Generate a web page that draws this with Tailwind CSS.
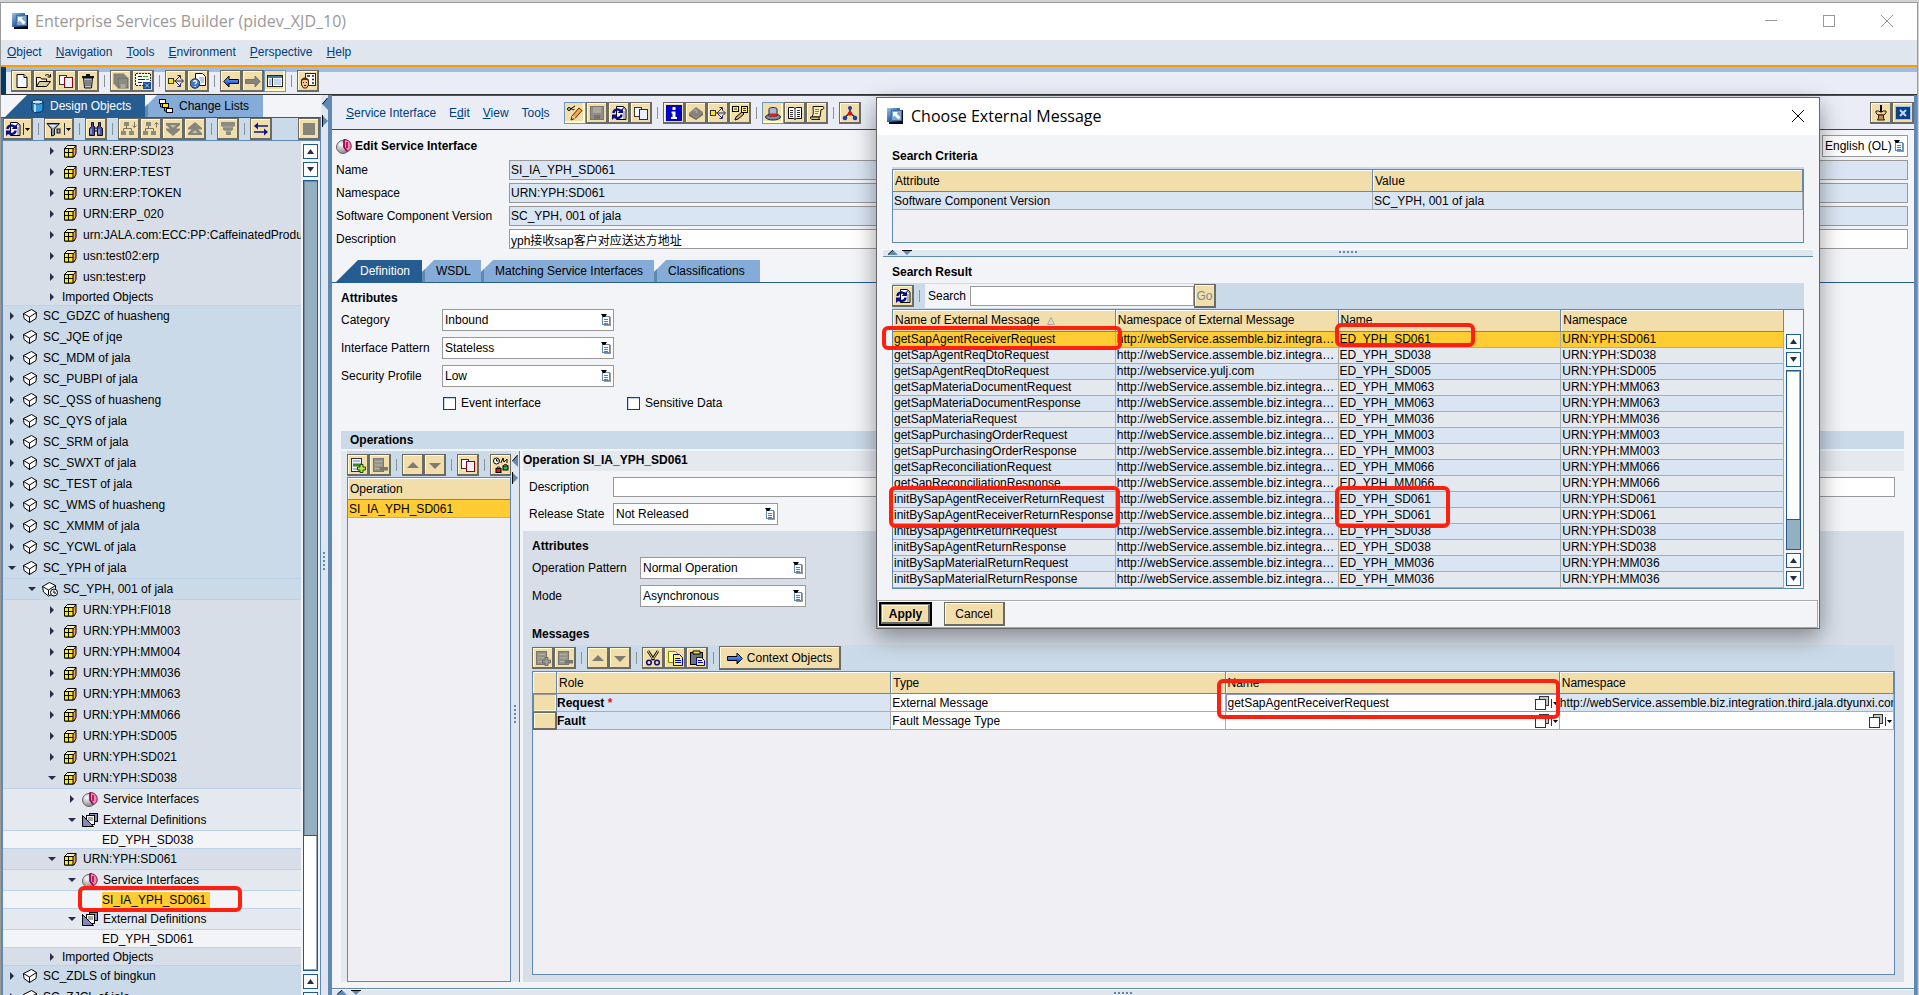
<!DOCTYPE html>
<html lang="en">
<head>
    <meta charset="UTF-8">
    <meta name="viewport" content="width=device-width, initial-scale=1.0">
    <title>Enterprise Services Builder (pidev_XJD_10)</title>
    <script src="https://cdn.jsdelivr.net/npm/@tailwindcss/browser@4"></script>
</head>
<body class="h-screen flex flex-col overflow-hidden relative bg-[#d2d2d2] pt-[2px] pr-px text-xs text-black font-['Liberation_Sans','Noto_Sans_CJK_SC',sans-serif]">

    <!-- Icons -->
    <svg class="absolute w-0 h-0" xmlns="http://www.w3.org/2000/svg">
        <defs>
            <linearGradient id="gBlue" x1="0" y1="0" x2="1" y2="1"><stop offset="0" stop-color="#9cc4ee"/><stop offset=".5" stop-color="#3a6ea8"/><stop offset="1" stop-color="#06182e"/></linearGradient>
            <linearGradient id="gArrow" x1="0" y1="0" x2="0" y2="1"><stop offset="0" stop-color="#6fd0ff"/><stop offset="1" stop-color="#0020e0"/></linearGradient>
            <radialGradient id="gBall" cx=".35" cy=".3" r=".8"><stop offset="0" stop-color="#fff"/><stop offset="1" stop-color="#777"/></radialGradient>
        </defs>
        <symbol id="i-app" viewBox="0 0 16 16"><rect x="2" y="2" width="14" height="14" fill="#000814"/><rect x="0" y="0" width="13" height="14" fill="url(#gBlue)"/><rect x="4" y="2" width="11" height="11" fill="#3d6fa6"/><rect x="5" y="3" width="9" height="9" fill="#7ba7d6"/><path d="M6 4h5L9.500 5.500l4 4-2 2-4-4L6 9z" fill="#fff"/></symbol>
        <symbol id="i-new" viewBox="0 0 16 16"><path d="M3 1.500h7l3 3v10H3z" fill="#f4f8ff" stroke="#000"/><path d="M10 1.500v3h3" fill="#fff" stroke="#000"/></symbol>
        <symbol id="i-open" viewBox="0 0 16 16"><path d="M.5 13.500v-9h4l1 1.500h5v2.500" fill="#f5f0c0" stroke="#000"/><path d="M.5 13.500l3-5h11l-4 5z" fill="#d9cf9a" stroke="#000"/><path d="M9 2.500c2-1.500 4-1 5 1M14.500 1v3h-3" fill="none" stroke="#000"/></symbol>
        <symbol id="i-copy" viewBox="0 0 16 16"><rect x="1.500" y="2.500" width="7" height="9" fill="#f6f8ff" stroke="#333"/><rect x="6.500" y="4.500" width="8" height="10" fill="#e8f2ff" stroke="#900010"/></symbol>
        <symbol id="i-trash" viewBox="0 0 16 16"><path d="M3.500 5h9l-1 10h-7z" fill="#b9bec8" stroke="#111"/><path d="M2 4h12M6 2h4" stroke="#111" stroke-width="2"/><path d="M6 7v6M8 7v6M10 7v6" stroke="#444"/></symbol>
        <symbol id="i-saveall" viewBox="0 0 16 16"><rect x="1" y="1" width="10" height="10" fill="#8b8b86" stroke="#77776f"/><rect x="3" y="3" width="10" height="10" fill="#9a9a94" stroke="#77776f"/><rect x="5" y="5" width="10" height="10" fill="#8b8b86" stroke="#66665f"/><path d="M7.500 11h5v4h-5z" fill="#aaa9a0"/></symbol>
        <symbol id="i-form" viewBox="0 0 16 16"><rect x="1" y="1" width="14" height="11" fill="#f6fbf6"/><path d="M1 .5h14M.5 1v11M1 12.500h8M15.500 1v7" fill="none" stroke="#222" stroke-dasharray="2 1"/><path d="M3 3.500h4M3 6.500h7M3 9.500h4" stroke="#222"/><path d="M8 3.500h5M11 6.500h3" stroke="#3aa03a"/><rect x="8" y="9" width="8" height="7" fill="#1d4c94"/><path d="M10 10.500l4 4m0-4l-4 4" stroke="#a8ccf4"/></symbol>
        <symbol id="i-where" viewBox="0 0 16 16"><rect x=".5" y="5.500" width="5" height="5" fill="#ffe600" stroke="#333"/><path d="M6 8h9M7 8l5-5M7 8l5 5" fill="none" stroke="#1c2a7a"/><path d="M9.500 2.500h3v3M9.500 13.500h3v-3M13 5.500l2.500 2.500-2.500 2.500" fill="none" stroke="#1c2a7a"/></symbol>
        <symbol id="i-help" viewBox="0 0 16 16"><path d="M5.500.5h7l3 3v9h-10z" fill="#fff" stroke="#00008b"/><path d="M9 5h5M10 7h4M11 9h3" stroke="#7b8fc0"/><circle cx="5" cy="10.500" r="4.800" fill="#3c78c4" stroke="#12356b"/><path d="M3.500 9c0-2 3.200-2 3.200 0 0 1.200-1.600 1.200-1.600 2.400M5.100 13v1" fill="none" stroke="#fff" stroke-width="1.300"/></symbol>
        <symbol id="i-back" viewBox="0 0 16 16"><path d="M.8 8.500L6 3v3.500h9.500v4H6V14z" fill="url(#gArrow)" stroke="#000"/></symbol>
        <symbol id="i-fwd" viewBox="0 0 16 16"><path d="M15.200 8.500L10 3v3.500H.5v4H10V14z" fill="#85857c" stroke="#77776f"/></symbol>
        <symbol id="i-ctx" viewBox="0 0 16 16"><path d="M15.200 8.500L10 3v3.500H.5v4H10V14z" fill="url(#gArrow)" stroke="#000"/></symbol>
        <symbol id="i-window" viewBox="0 0 16 16"><rect x=".5" y="2.500" width="15" height="11" fill="#fff" stroke="#222"/><path d="M1 4h14" stroke="#3a78c0" stroke-width="2"/><path d="M5.500 5v8" stroke="#222"/><path d="M2 7h2.500M2 9h2.500M2 11h2.500" stroke="#3a78c0"/><path d="M7 7h7M7 9h7M7 11h7" stroke="#7fa9da"/></symbol>
        <symbol id="i-user" viewBox="0 0 16 16"><rect x="5.500" y=".5" width="10" height="12" fill="#fff" stroke="#222"/><path d="M7 3h3M12 3h2M12 6.500h2M12 10h2" stroke="#222" stroke-width="1.600"/><path d="M1.500 8c0-4 7-4 7 0v4l-2 3h-3l-2-3z" fill="#f3c08a" stroke="#3a1c00"/><path d="M1 8.500c0-5 8-5 8 0L7 7H3z" fill="#5a3010"/><path d="M3 9.500h1M6 9.500h1M4 12.500h2" stroke="#3a1c00"/></symbol>
        <symbol id="i-refresh" viewBox="0 0 16 16"><path d="M5.500 1.500h7l2.500 2.500v10.500H5.500z" fill="#fff" stroke="#000"/><path d="M12.500 1.500V4H15M13 6v8" fill="none" stroke="#666"/><path d="M2.500 8c0-4 6-4.500 7.500-1.500M10.500 9.500c0 4-6 4.500-7.500 1.500" fill="none" stroke="#0a0a8c" stroke-width="2.400"/><path d="M6.500 8H12V3zM6.500 9.500H1V15z" fill="#0a0a8c"/></symbol>
        <symbol id="i-filter" viewBox="0 0 16 16"><path d="M1 2.500h12.500L8.500 8v6l-3 1V8z" fill="#7d93ad" stroke="#111"/><path d="M3 4h8L7 7z" fill="#dfe9f4"/><rect x="11" y="8" width="3" height="4" fill="#8aa4c4" stroke="#112"/></symbol>
        <symbol id="i-find" viewBox="0 0 16 16"><path d="M3.500 1.500h2v4h1v9h-5v-7l2-2zM12.500 1.500h-2v4h-1v9h5v-7l-2-2z" fill="#4a4f9c" stroke="#0a0a30"/><path d="M6.500 7h3v3h-3z" fill="#9fa4d8" stroke="#0a0a30"/><path d="M3 8v5M11 8v5" stroke="#c8cbf0"/></symbol>
        <symbol id="i-expand" viewBox="0 0 16 16"><path d="M3 1h5v4H3zM0 10h5v4H0zM8 10h5v4H8z" fill="#8b8b82"/><path d="M5.500 5v3M2.500 10V7.500h8V10M13.500 1v5M11.500 4.500l2 2 2-2" fill="none" stroke="#77776f"/></symbol>
        <symbol id="i-collapse" viewBox="0 0 16 16"><path d="M3 1h5v4H3zM0 10h5v4H0zM8 10h5v4H8z" fill="#8b8b82"/><path d="M5.500 5v3M2.500 10V7.500h8V10M13.500 1.500v5M11.500 3.500l2-2 2 2" fill="none" stroke="#77776f"/></symbol>
        <symbol id="i-ddown" viewBox="0 0 16 16"><path d="M1 2h14v2L11 7.500h4V9l-7 6-7-6V7.500h4L1 4z" fill="#85857c"/><path d="M5 4h6L8 7z" fill="#c4bfa0"/></symbol>
        <symbol id="i-dup" viewBox="0 0 16 16"><path d="M1 14h14v-2l-4-3.500h4V7L8 1 1 7v1.500h4L1 12z" fill="#85857c"/><path d="M5 12h6L8 9z" fill="#c4bfa0"/></symbol>
        <symbol id="i-stack" viewBox="0 0 16 16"><path d="M1 1h14v4l-2 1v3l-2 1v4H6v-4L3 9V6L1 5z" fill="#8b8b82"/><path d="M3 6h10M6 10h5" stroke="#b5b3a0"/></symbol>
        <symbol id="i-swap" viewBox="0 0 16 16"><path d="M15 5H3M13 11H1" stroke="#0a1a8c" stroke-width="1.600"/><path d="M5 1.500v7L1 5zM11 7.500v7l4-3.500z" fill="#0a1a8c"/></symbol>
        <symbol id="i-square" viewBox="0 0 16 16"><rect x="2" y="2" width="12" height="12" fill="#85857c"/></symbol>
        <symbol id="i-tri-up" viewBox="0 0 16 16"><path d="M2 11h12L8 5z" fill="#7c7c74"/></symbol>
        <symbol id="i-tri-down" viewBox="0 0 16 16"><path d="M2 6h12l-6 6z" fill="#7c7c74"/></symbol>
        <symbol id="i-wand" viewBox="0 0 16 16"><path d="M4 15l1-4 7-8 3 2.500-7 8z" fill="#f0a848" stroke="#5a2a00"/><path d="M5 11l3 2.500" stroke="#fff"/><circle cx="2" cy="4" r="1.500" fill="none" stroke="#000"/><path d="M3.500 4L8 1M3.500 4.500c2-1.500 2 1 4 0" fill="none" stroke="#000"/></symbol>
        <symbol id="i-save" viewBox="0 0 16 16"><rect x="1.500" y="1.500" width="13" height="13" fill="#8f8f88" stroke="#77776f"/><path d="M4 2h8v6H4z" fill="#a9a9a2"/><path d="M5 10h6v4H5z" fill="#77776f"/></symbol>
        <symbol id="i-info" viewBox="0 0 16 16"><rect width="16" height="16" fill="#0000c4"/><path d="M6.500 2h3v3h-3zM5.500 6.500h4V12H11v2H5v-2h1.500V8.500h-1z" fill="#fff"/></symbol>
        <symbol id="i-book" viewBox="0 0 16 16"><path d="M1 8l7-6 7 5-7 6z" fill="#85857c"/><path d="M1 8v3l7 4 7-5V7l-7 6z" fill="#6f6f68"/><path d="M6 6c2-2 4 0 2 2" fill="none" stroke="#c2c0b0"/></symbol>
        <symbol id="i-edit" viewBox="0 0 16 16"><rect x=".5" y="1.500" width="6" height="5" fill="#fff34a" stroke="#000"/><rect x="9.500" y="1.500" width="6" height="6" fill="#fff34a" stroke="#000"/><path d="M11 3.500h3M11 5.500h3M2 4h3" stroke="#333"/><path d="M3 15l1-3 6-5 2 2-6 5z" fill="#d9b27c" stroke="#000"/></symbol>
        <symbol id="i-hat" viewBox="0 0 16 16"><ellipse cx="8" cy="12" rx="7.500" ry="3" fill="#7b8ea8" stroke="#223"/><path d="M4 11V4c0-2 8-2 8 0v7z" fill="#a9b9cf" stroke="#223"/><path d="M4 8.500h8V11c-2 1-6 1-8 0z" fill="#d02020"/></symbol>
        <symbol id="i-pages" viewBox="0 0 16 16"><path d="M1.500 2.500h5l1.500 1 1.500-1h5v11h-5L8 14.500l-1.500-1h-5z" fill="#fff" stroke="#000"/><path d="M8 4v10M3 5.500h3M3 7.500h3M3 9.500h3M3 11.500h3M10 5.500h3M10 7.500h3M10 9.500h3M10 11.500h3" stroke="#333"/></symbol>
        <symbol id="i-scroll" viewBox="0 0 16 16"><path d="M4 1.500h10c1 0 1 3-.5 3H12l-1 7.500H3c2-3 1-7 1-10.500z" fill="#f5efb8" stroke="#111"/><path d="M1.500 12h8.500c0 2 0 2.500 1 2.500H3c-1 0-1.500-1-1.500-2.500z" fill="#cfc78c" stroke="#111"/><path d="M6 4.500h4M6 6.500h4M6 8.500h3" stroke="#777"/></symbol>
        <symbol id="i-nodes" viewBox="0 0 16 16"><path d="M8 3v5M8 8l-5 4M8 8l5 4" stroke="#223" stroke-width="1.500"/><circle cx="8" cy="3" r="2" fill="#1c3fa0"/><circle cx="8" cy="8.500" r="2.300" fill="#d81818"/><circle cx="3" cy="13" r="2.300" fill="#1c3fa0"/><circle cx="13" cy="13" r="2.300" fill="#1c3fa0"/></symbol>
        <symbol id="i-pin" viewBox="0 0 16 16"><path d="M8 0v7" stroke="#000" stroke-width="2"/><path d="M3 6h3l1 1h2l1-1h3v2l-2 2h-6L3 8z" fill="#f0cf90" stroke="#2a1a08"/><path d="M5.500 10h5v3l1 2h-7l1-2z" fill="#c08a50" stroke="#2a1a08"/></symbol>
        <symbol id="i-close" viewBox="0 0 16 16"><rect x=".5" y="1.500" width="15" height="13" fill="#0d3f86" stroke="#9fc0f2"/><path d="M5 5l6 6m0-6l-6 6" stroke="#bcd8fa" stroke-width="2"/></symbol>
        <symbol id="i-addrow" viewBox="0 0 16 16"><rect x="1.500" y="1.500" width="10" height="13" fill="#eef0fc" stroke="#333"/><path d="M3 4h7M3 12h4" stroke="#7a7fc0"/><path d="M3 8h8" stroke="#2f8f2f" stroke-width="3"/><path d="M10 7.500h3V10h2.500v3H13v2.500h-3V13H7.500v-3H10z" fill="#b6e04a" stroke="#1d4a00"/></symbol>
        <symbol id="i-addrow-off" viewBox="0 0 16 16"><rect x="1.500" y="1.500" width="10" height="13" fill="#93938c" stroke="#77776f"/><path d="M3 4.500h7M3 8h7M3 11.500h4" stroke="#b5b3a6"/><path d="M10 7.500h3V10h2.500v3H13v2.500h-3V13H7.500v-3H10z" fill="#9c9c94" stroke="#6c6c65"/></symbol>
        <symbol id="i-delrow" viewBox="0 0 16 16"><rect x="1.500" y="1.500" width="10" height="13" fill="#93938c" stroke="#77776f"/><path d="M3 4.500h7M3 8h7M3 11.500h4" stroke="#b5b3a6"/><path d="M8 10h8v3.500H8z" fill="#77776f"/></symbol>
        <symbol id="i-compare" viewBox="0 0 16 16"><circle cx="3.500" cy="4" r="3" fill="#fff" stroke="#000"/><path d="M3.500 2v2h2M8 6l2-5 1 4 3-3v4" fill="none" stroke="#000"/><path d="M3.500 11.500c0-2 4-2 4 0M10.500 9c0-2 4-2 4 0" fill="none" stroke="#000"/><rect x="3" y="11.500" width="5" height="4" fill="#e02020" stroke="#000"/><rect x="10" y="9" width="5" height="4" fill="#20c040" stroke="#000"/></symbol>
        <symbol id="i-cut" viewBox="0 0 16 16"><path d="M3 1l6 9M13 1L7 10" stroke="#000" stroke-width="2.500"/><path d="M3 1l5 8M13 1L8 9" stroke="#f3ee6a"/><circle cx="4" cy="12.500" r="2.300" fill="none" stroke="#10107a" stroke-width="1.600"/><circle cx="12" cy="12.500" r="2.300" fill="none" stroke="#10107a" stroke-width="1.600"/></symbol>
        <symbol id="i-copy2" viewBox="0 0 16 16"><path d="M1.500 1.500h7l2 2v9h-9z" fill="#fff9a0" stroke="#888800"/><path d="M6.500 4.500h6l3 3v8h-9z" fill="#fff94a" stroke="#0000b8"/><path d="M8 8.500h5M8 10.500h6M8 12.500h6" stroke="#0000b8"/></symbol>
        <symbol id="i-paste" viewBox="0 0 16 16"><rect x="1.500" y="2.500" width="12" height="12" fill="#6c7480" stroke="#000"/><path d="M4 1h7v3H4z" fill="#f4e640" stroke="#000"/><path d="M7.500 7.500h5l3 3v5h-8z" fill="#fff94a" stroke="#0000b8"/><path d="M9 10.500h4M9 12.500h5" stroke="#0000b8"/></symbol>
        <symbol id="i-cyl" viewBox="0 0 16 16"><path d="M2 4v8c0 3 11 3 11 0V4z" fill="#2f9be0" stroke="#0a2a50"/><path d="M5 6v8" stroke="#aee0ff" stroke-width="2"/><ellipse cx="7.500" cy="4" rx="5.500" ry="2" fill="#c9ecff" stroke="#0a2a50"/></symbol>
        <symbol id="i-lists" viewBox="0 0 16 16"><rect x="1.500" y="1.500" width="6" height="4" fill="#fff" stroke="#000"/><rect x="4.500" y="5.500" width="6" height="4" fill="#ffe600" stroke="#000"/><rect x="8.500" y="10.500" width="6" height="4" fill="#fff" stroke="#000"/><path d="M2.500 6v3h2M6.500 10v3h2" fill="none" stroke="#000"/></symbol>
        <symbol id="i-box" viewBox="0 0 16 16"><path d="M1.500 5.500l8-4 5 3-.5 6-6.500 4-5.500-4z" fill="#fff" stroke="#000"/><path d="M1.500 5.500l6 3.500 7-4.500M7.500 9v5.500" fill="none" stroke="#000"/></symbol>
        <symbol id="i-boxver" viewBox="0 0 16 16"><path d="M.5 5.500l7-4 6 3v3l-1 5-6 2.500-5-4z" fill="#fff" stroke="#000"/><path d="M.5 5.500l6 3.500 7-4.500M6.500 9v5" fill="none" stroke="#000"/><circle cx="12" cy="11.500" r="3.500" fill="#eee" stroke="#000"/><path d="M12 9.500v2.500h2" fill="none" stroke="#000"/></symbol>
        <symbol id="i-ns" viewBox="0 0 16 16"><path d="M2.500 5.500l3-3h8.500v8l-2 3.500h-9.500z" fill="#f0a060" stroke="#000"/><path d="M2.500 5.500l3-3H14l-2.500 3z" fill="#fff6b0" stroke="#000"/><path d="M2.500 5.500h8.500v8.500H2.500z" fill="#ffee00" stroke="#000"/><path d="M6.500 5.500V14M2.500 9.500h8.500" stroke="#000"/></symbol>
        <symbol id="i-svc" viewBox="0 0 16 16"><circle cx="7" cy="9" r="6.500" fill="url(#gBall)" stroke="#666"/><path d="M8 1.500c9 0 9 11 3 12L8 9z" fill="#f58a9c" stroke="#7a0a50"/><path d="M8 1.500V9l3 4M11 4v6" fill="none" stroke="#9a0060" stroke-width="1.500"/></symbol>
        <symbol id="i-ext" viewBox="0 0 16 16"><rect x="7.500" y="1.500" width="8" height="8" fill="#8a8ab8" stroke="#000"/><rect x="4.500" y="3.500" width="8" height="9" fill="#fff" stroke="#000"/><path d="M6 6h5M6 8h5" stroke="#555"/><path d="M.5 3.500l11 11H.5z" fill="#8488b8" stroke="#000"/></symbol>
        <symbol id="i-list" viewBox="0 0 10 12"><path d="M3 3h7v9H3z" fill="#9a9a9a"/><rect x="1.500" y="2.500" width="7" height="8" fill="#fff" stroke="#5f89b3"/><path d="M3 5.500h4M3 7.500h4M3 9.500h4" stroke="#4a7fb0"/><path d="M0 0h6L4 3H2z" fill="#000"/></symbol>
        <symbol id="i-pick" viewBox="0 0 24 14"><rect x="4.500" y=".5" width="9" height="9" fill="#b9c9cf" stroke="#333"/><rect x=".5" y="3.500" width="10" height="10" fill="#fff" stroke="#333"/><path d="M16.500 3v9" stroke="#333"/><path d="M18 6h5l-2.500 3z" fill="#000"/></symbol>
    </svg>

    <div class="flex-1 min-h-0 flex flex-col border-t border-x border-[#999999] bg-[#f2f4f8]">

        <!-- Title bar -->
        <header class="h-[37px] shrink-0 flex items-center bg-white pl-[11px] pb-px">
            <svg class="size-4"><use href="#i-app"/></svg>
            <h1 class="ml-[7px] pb-px flex-1 text-base font-['Open_Sans',sans-serif] text-[#999999] whitespace-nowrap">Enterprise Services Builder (pidev_XJD_10)</h1>
            <div class="flex items-center gap-[46px] mr-6">
                <button aria-label="Minimize"><svg class="w-3 h-3" viewBox="0 0 12 12"><path d="M0 5.500h12" stroke="#999"/></svg></button>
                <button aria-label="Maximize"><svg class="w-3 h-3" viewBox="0 0 12 12"><rect x=".5" y=".5" width="11" height="11" fill="none" stroke="#999"/></svg></button>
                <button aria-label="Close"><svg class="w-3 h-3" viewBox="0 0 12 12"><path d="M0 0l12 12M12 0L0 12" stroke="#999"/></svg></button>
            </div>
        </header>

        <nav class="h-[27px] shrink-0 flex items-center gap-[14px] pl-[6px] pb-[2px] bg-[#dfe6ee] border-b-2 border-[#ff9900] text-[#003c82]">
            <button><u>O</u>bject</button>
            <button><u>N</u>avigation</button>
            <button><u>T</u>ools</button>
            <button><u>E</u>nvironment</button>
            <button><u>P</u>erspective</button>
            <button><u>H</u>elp</button>
        </nav>

        <div class="h-7 shrink-0 flex border-b border-[#333333] bg-[linear-gradient(#9fbde0_5px,#eaedf6_5px)]">
            <div class="w-[5px] bg-[#003a66]"></div>
            <div class="flex pt-[3px] pl-[5px]" data-toolbar="main"></div>
        </div>

        <div class="flex-1 min-h-0 flex">

            <!-- Navigation area -->
            <aside class="w-[320px] shrink-0 flex flex-col">
                <div class="h-[23px] shrink-0 flex border-b border-[#255d93] pl-1">
                    <button class="w-[140px] pl-[25px] flex items-center gap-1 text-white bg-[#255d93] [clip-path:polygon(22px_0,100%_0,100%_100%,0_100%)]"><svg class="size-4"><use href="#i-cyl"/></svg>Design Objects</button>
                    <button class="w-[118px] pl-[10px] flex items-center gap-[5px] bg-[#85acd9] border-l-3 border-[#5f89b0] [clip-path:polygon(12px_0,100%_0,100%_100%,0_100%,0_12px)]"><svg class="size-4"><use href="#i-lists"/></svg>Change Lists</button>
                </div>
                <div class="flex-1 min-h-0 flex flex-col border-l-2 border-r border-[#5f89b3]">
                    <div class="h-[23px] shrink-0 flex bg-[#cbdae9] border-b border-[#5f89b3]" data-toolbar="tree"></div>
                    <div class="flex-1 min-h-0 flex">
                        <div class="flex-1 min-w-0 overflow-hidden" id="tree"></div>
                        <div class="w-[19px] shrink-0 flex flex-col items-center gap-[3px] pt-[3px] bg-[#f2f4f8]">
                            <button aria-label="Scroll up" class="w-[15px] h-[15px] shrink-0 flex items-center justify-center border border-[#1f5b92] bg-white"><svg class="w-[9px] h-[5px]" viewBox="0 0 9 5"><path d="M1 5h7L4.500 0z" fill="#2a2a4a"/></svg></button>
                            <button aria-label="Scroll down" class="w-[15px] h-[15px] shrink-0 flex items-center justify-center border border-[#1f5b92] bg-white"><svg class="w-[9px] h-[5px]" viewBox="0 0 9 5"><path d="M1 0h7L4.500 5z" fill="#2a2a4a"/></svg></button>
                            <div class="w-[15px] flex-1 border border-[#1f5b92] bg-white flex flex-col shadow-[inset_-1px_-1px_0_#9aa4ae]">
                                <div class="h-[83%] bg-[#94afc1] border-b border-[#1f5b92] shadow-[inset_1px_1px_0_#76899a]"></div>
                            </div>
                            <button aria-label="Page up" class="w-[15px] h-[15px] shrink-0 flex items-center justify-center border border-[#1f5b92] bg-white"><svg class="w-[9px] h-[5px]" viewBox="0 0 9 5"><path d="M1 5h7L4.500 0z" fill="#2a2a4a"/></svg></button>
                            <div class="w-[15px] h-[3px] shrink-0 border border-b-0 border-[#1f5b92] bg-white"></div>
                        </div>
                    </div>
                </div>
            </aside>

            <!-- Splitter -->
            <div class="w-[7px] shrink-0 bg-[#dfe6ee] flex flex-col items-center pt-[3px]">
                <svg class="w-[6px] h-[30px] shrink-0" viewBox="0 0 6 30"><path d="M6 0v12L0 6z" fill="#5f89b3"/><path d="M5.500 0L.5 6" stroke="#000"/><path d="M0 17v12l6-6z" fill="#5f89b3"/><path d="M.5 17v12" stroke="#000"/></svg>
                <svg class="w-[3px] h-[20px] mt-[424px]" viewBox="0 0 3 20"><path d="M1 0v20" stroke="#5f89b3" stroke-width="2" stroke-dasharray="2 2"/></svg>
            </div>

            <!-- Work area -->
            <main class="flex-1 min-w-0 flex flex-col border-l-4 border-r-3 border-[#5f89b3]">
                <div class="h-[35px] shrink-0 flex items-start border-t border-t-[#255d93] border-b border-b-[#444444] bg-[#eaedf6] pt-[6px] pl-[14px]">
                    <nav class="flex items-center h-[22px] gap-[13px] w-[218px] text-[#003c82] whitespace-nowrap">
                        <button><u>S</u>ervice Interface</button>
                        <button>E<u>d</u>it</button>
                        <button><u>V</u>iew</button>
                        <button>Too<u>l</u>s</button>
                    </nav>
                    <div class="flex flex-1" data-toolbar="editor"></div>
                    <div class="flex" data-toolbar="pane"></div>
                </div>

                <div class="pl-1 pr-[6px] pt-[5px]">
                    <div class="flex items-center h-[22px]">
                        <svg class="size-4"><use href="#i-svc"/></svg>
                        <h2 class="ml-[3px] flex-1 font-bold">Edit Service Interface</h2>
                        <div class="w-[86px] h-[22px] flex items-center border border-[#999999] bg-white pr-[3px]">
                            <select aria-label="Language" class="flex-1 min-w-0 appearance-none pl-[2px] whitespace-nowrap outline-none"><option>English (OL)</option></select>
                            <svg class="w-[10px] h-3 shrink-0"><use href="#i-list"/></svg>
                        </div>
                    </div>
                    <div class="mt-[3px] grid grid-cols-[173px_1fr] gap-y-[3px] items-center">
                        <label for="name">Name</label>
                        <input id="name" readonly value="SI_IA_YPH_SD061" class="h-5 px-px border border-[#999999] bg-[#d9e5f2] outline-none">
                        <label for="namespace">Namespace</label>
                        <input id="namespace" readonly value="URN:YPH:SD061" class="h-5 px-px border border-[#999999] bg-[#d9e5f2] outline-none">
                        <label for="swcv">Software Component Version</label>
                        <input id="swcv" readonly value="SC_YPH, 001 of jala" class="h-5 px-px border border-[#999999] bg-[#d9e5f2] outline-none">
                        <label for="desc">Description</label>
                        <input id="desc" value="yph接收sap客户对应送达方地址" class="h-5 px-px border border-[#999999] bg-white outline-none">
                    </div>
                </div>

                <div class="mt-[11px] h-[23px] shrink-0 flex border-b border-[#255d93] pl-1">
                    <button class="w-[86px] pl-[24px] text-left text-white bg-[#255d93] [clip-path:polygon(22px_0,100%_0,100%_100%,0_100%)]">Definition</button>
                    <button class="w-[59px] pl-[11px] text-left bg-[#85acd9] border-l-3 border-[#5f89b0] [clip-path:polygon(12px_0,100%_0,100%_100%,0_100%,0_12px)]">WSDL</button>
                    <button class="w-[173px] pl-[11px] text-left bg-[#85acd9] border-l-3 border-[#5f89b0] [clip-path:polygon(12px_0,100%_0,100%_100%,0_100%,0_12px)]">Matching Service Interfaces</button>
                    <button class="w-[106px] pl-[11px] text-left bg-[#85acd9] border-l-3 border-[#5f89b0] [clip-path:polygon(12px_0,100%_0,100%_100%,0_100%,0_12px)]">Classifications</button>
                </div>

                <div class="flex-1 min-h-0 flex flex-col pt-[7px] pl-[9px] pr-[10px] pb-[6px]">
                    <h3 class="font-bold leading-4">Attributes</h3>
                    <div class="mt-[3px] grid grid-cols-[101px_172px] gap-y-[6px] items-center">
                        <label for="category">Category</label>
                        <div class="h-[22px] flex items-center border border-[#999999] bg-white pr-[2px]"><select id="category" class="flex-1 appearance-none pl-[2px] outline-none"><option>Inbound</option></select><svg class="w-[10px] h-3"><use href="#i-list"/></svg></div>
                        <label for="pattern">Interface Pattern</label>
                        <div class="h-[22px] flex items-center border border-[#999999] bg-white pr-[2px]"><select id="pattern" class="flex-1 appearance-none pl-[2px] outline-none"><option>Stateless</option></select><svg class="w-[10px] h-3"><use href="#i-list"/></svg></div>
                        <label for="profile">Security Profile</label>
                        <div class="h-[22px] flex items-center border border-[#999999] bg-white pr-[2px]"><select id="profile" class="flex-1 appearance-none pl-[2px] outline-none"><option>Low</option></select><svg class="w-[10px] h-3"><use href="#i-list"/></svg></div>
                    </div>
                    <div class="mt-2 flex h-4 pl-[102px]">
                        <label class="w-[184px] flex items-center gap-[5px]"><input type="checkbox" class="appearance-none size-[13px] border border-[#333355] bg-white shadow-[inset_1px_1px_0_#c5d6ee] checked:bg-[#333355]">Event interface</label>
                        <label class="flex items-center gap-[5px]"><input type="checkbox" class="appearance-none size-[13px] border border-[#333355] bg-white shadow-[inset_1px_1px_0_#c5d6ee] checked:bg-[#333355]">Sensitive Data</label>
                    </div>

                    <h3 class="mt-5 h-[18px] shrink-0 flex items-center pl-[9px] font-bold bg-[#cbdae9]">Operations</h3>

                    <div class="mt-[2px] flex-1 min-h-0 flex">
                        <!-- Operation list -->
                        <div class="w-[170px] shrink-0 flex flex-col pl-[6px] bg-[#e4e8ef]">
                            <div class="flex h-[26px] shrink-0 pt-[3px] bg-[#cbdae9]" data-toolbar="ops"></div>
                            <div class="flex-1 min-h-0 border border-[#5f89b3] bg-[#efeff4]">
                                <table class="w-full border-separate border-spacing-0">
                                    <thead><tr><th class="h-[22px] pl-[2px] text-left font-normal bg-[#f2deab] border-b border-[#5f89b3] shadow-[inset_1px_1px_0_#ffffff]">Operation</th></tr></thead>
                                    <tbody><tr><td class="h-[18px] py-0 pl-px bg-[#ffcc33] border-b border-[#bdb07a]">SI_IA_YPH_SD061</td></tr></tbody>
                                </table>
                            </div>
                        </div>

                        <div class="w-[9px] shrink-0 bg-[#dfe6ee] border-r border-[#5f89b3] flex flex-col items-center pt-1">
                            <svg class="w-[6px] h-[30px] shrink-0" viewBox="0 0 6 30"><path d="M6 0v12L0 6z" fill="#5f89b3"/><path d="M5.500 0L.5 6" stroke="#000"/><path d="M0 17v12l6-6z" fill="#5f89b3"/><path d="M.5 17v12" stroke="#000"/></svg>
                            <svg class="w-[3px] h-[20px] mt-[220px]" viewBox="0 0 3 20"><path d="M1 0v20" stroke="#5f89b3" stroke-width="2" stroke-dasharray="2 2"/></svg>
                        </div>

                        <!-- Operation details -->
                        <section class="ml-[3px] flex-1 min-w-0 flex flex-col">
                            <h3 class="h-5 shrink-0 leading-[19px] font-bold bg-[#e4e8ef]">Operation SI_IA_YPH_SD061</h3>
                            <div class="grid grid-cols-[84px_1fr] gap-y-[6px] items-center py-[6px] pl-[6px] pr-[9px]">
                                <label for="opDesc">Description</label>
                                <input id="opDesc" class="h-5 px-px border border-[#999999] bg-white outline-none">
                                <label for="release" class="whitespace-nowrap">Release State</label>
                                <div class="w-[165px] h-[22px] flex items-center border border-[#999999] bg-white pr-[2px]"><select id="release" class="flex-1 appearance-none pl-[2px] outline-none"><option>Not Released</option></select><svg class="w-[10px] h-3"><use href="#i-list"/></svg></div>
                            </div>
                            <div class="flex-1 min-h-0 flex flex-col pt-[7px] pb-[7px] px-[9px] bg-[#d7dee8]">
                                <h3 class="font-bold leading-4">Attributes</h3>
                                <div class="mt-[3px] grid grid-cols-[108px_166px] gap-y-[6px] items-center">
                                    <label for="opPattern">Operation Pattern</label>
                                    <div class="h-[22px] flex items-center border border-[#999999] bg-white pr-[2px]"><select id="opPattern" class="flex-1 appearance-none pl-[2px] outline-none"><option>Normal Operation</option></select><svg class="w-[10px] h-3"><use href="#i-list"/></svg></div>
                                    <label for="mode">Mode</label>
                                    <div class="h-[22px] flex items-center border border-[#999999] bg-white pr-[2px]"><select id="mode" class="flex-1 appearance-none pl-[2px] outline-none"><option>Asynchronous</option></select><svg class="w-[10px] h-3"><use href="#i-list"/></svg></div>
                                </div>
                                <h3 class="mt-[19px] font-bold leading-4">Messages</h3>
                                <div class="mt-[3px] h-[26px] shrink-0 flex items-center bg-[#cbdae9]">
                                    <div class="flex" data-toolbar="messages"></div>
                                    <button class="h-6 w-[122px] flex items-center justify-center gap-1 bg-[#f2deab] border border-r-2 border-b-2 border-[#6b6b66] shadow-[inset_1px_1px_0_#fffcd0]"><svg class="size-4"><use href="#i-ctx"/></svg>Context Objects</button>
                                </div>
                                <div class="flex-1 min-h-0 border border-[#5f89b3] bg-[#efeff4]">
                                    <table class="w-full table-fixed border-separate border-spacing-0 leading-4">
                                        <thead>
                                            <tr class="text-left">
                                                <th class="w-6 h-[22px] p-0 bg-[#f2deab] border-b border-r border-[#5f89b3] shadow-[inset_1px_1px_0_#ffffff]"></th>
                                                <th class="p-0 pl-[2px] font-normal bg-[#f2deab] border-b border-r border-[#5f89b3] shadow-[inset_1px_1px_0_#ffffff]">Role</th>
                                                <th class="p-0 pl-[2px] font-normal bg-[#f2deab] border-b border-r border-[#5f89b3] shadow-[inset_1px_1px_0_#ffffff]">Type</th>
                                                <th class="p-0 pl-[2px] font-normal bg-[#f2deab] border-b border-r border-[#5f89b3] shadow-[inset_1px_1px_0_#ffffff]">Name</th>
                                                <th class="p-0 pl-[2px] font-normal bg-[#f2deab] border-b border-r border-[#5f89b3] shadow-[inset_1px_1px_0_#ffffff]">Namespace</th>
                                            </tr>
                                        </thead>
                                        <tbody>
                                            <tr>
                                                <td class="h-[18px] p-0 bg-[#f2deab] border border-[#5f89b3] border-t-[#999999] shadow-[inset_-1px_-1px_0_#fffcd0]"></td>
                                                <td class="p-0 font-bold bg-[#d9e5f2] border-b border-r border-[#a9adb2]">Request <span class="text-[#ee1111]">*</span></td>
                                                <td class="p-0 pl-px bg-white border-b border-r border-[#a9adb2]">External Message</td>
                                                <td class="p-0 bg-white border border-[#8f93cc] relative">
                                                    <div class="flex items-center pl-px"><input aria-label="Message name" value="getSapAgentReceiverRequest" class="flex-1 min-w-0 h-4 outline-none"><svg class="w-6 h-[14px] shrink-0"><use href="#i-pick"/></svg></div>
                                                    <div class="absolute z-10 -left-[10px] -right-[1px] -top-[16px] -bottom-[8px] border-4 border-[#ff2010] rounded-md pointer-events-none"></div>
                                                </td>
                                                <td class="p-0 bg-[#d9e5f2] border-b border-r border-[#a9adb2] whitespace-nowrap overflow-hidden">http://webService.assemble.biz.integration.third.jala.dtyunxi.com</td>
                                            </tr>
                                            <tr>
                                                <td class="h-[18px] p-0 bg-[#f2deab] border border-b-2 border-r-2 border-[#6b6b66] shadow-[inset_1px_1px_0_#fffcd0]"></td>
                                                <td class="p-0 font-bold bg-[#d9e5f2] border-b border-r border-[#a9adb2]">Fault</td>
                                                <td class="p-0 pl-px bg-white border-b border-r border-[#a9adb2]">Fault Message Type</td>
                                                <td class="p-0 bg-white border-b border-r border-[#a9adb2]"><svg class="w-6 h-[14px] ml-auto"><use href="#i-pick"/></svg></td>
                                                <td class="p-0 bg-white border-b border-r border-[#a9adb2]"><svg class="w-6 h-[14px] ml-auto"><use href="#i-pick"/></svg></td>
                                            </tr>
                                        </tbody>
                                    </table>
                                </div>
                            </div>
                        </section>
                    </div>
                </div>

                <div class="h-[7px] shrink-0 flex items-end border-t border-[#5f89b3] bg-[#dfe6ee] shadow-[inset_0_1px_0_#ffffff] pl-1 pr-8 overflow-hidden">
                    <svg class="w-7 h-[5px]" viewBox="0 0 28 5"><path d="M1 5l5-5 5 5zM15 0h10l-5 5z" fill="#5f89b3"/><path d="M1 4.500L6 0M15 .5h10" stroke="#000"/></svg>
                    <svg class="w-[19px] h-[3px] mx-auto" viewBox="0 0 19 3"><path d="M0 1h19" stroke="#5f89b3" stroke-width="2" stroke-dasharray="2 2"/></svg>
                </div>
            </main>
        </div>
    </div>

    <!-- Search help dialog -->
    <div role="dialog" aria-labelledby="dlgTitle" class="absolute top-[97px] right-[99px] w-[944px] flex flex-col border border-[#666666] bg-[#f2f4f8] shadow-[0_8px_22px_rgba(0,0,0,0.4)]">
        <div class="h-[37px] flex items-center pl-[10px] pr-[15px] pb-px bg-white">
            <svg class="size-4"><use href="#i-app"/></svg>
            <h2 id="dlgTitle" class="ml-2 flex-1 text-base font-['Open_Sans',sans-serif]">Choose External Message</h2>
            <button aria-label="Close"><svg class="size-3" viewBox="0 0 12 12"><path d="M0 0l12 12M12 0L0 12" stroke="#000"/></svg></button>
        </div>

        <div class="pt-[13px] px-[15px]">
            <h3 class="font-bold leading-4">Search Criteria</h3>
            <div class="mt-[3px] h-[2px] bg-[#cbdae9]"></div>
            <div class="h-[74px] border border-[#5f89b3] bg-[#efeff4]">
                <table class="w-full table-fixed border-separate border-spacing-0">
                    <thead>
                        <tr class="text-left">
                            <th class="w-[480px] h-[22px] p-0 pl-[2px] font-normal bg-[#f2deab] border-b border-r border-[#5f89b3] shadow-[inset_1px_1px_0_#ffffff]">Attribute</th>
                            <th class="p-0 pl-[2px] font-normal bg-[#f2deab] border-b border-r border-[#5f89b3] shadow-[inset_1px_1px_0_#ffffff]">Value</th>
                        </tr>
                    </thead>
                    <tbody>
                        <tr>
                            <td class="h-[18px] p-0 pl-px bg-[#d9e5f2] border-b border-r border-[#a9adb2]">Software Component Version</td>
                            <td class="p-0 pl-px bg-[#d9e5f2] border-b border-r border-[#a9adb2]">SC_YPH, 001 of jala</td>
                        </tr>
                    </tbody>
                </table>
            </div>
        </div>

        <div class="mt-[6px] mx-[6px] h-2 flex items-center border-b border-[#5f89b3] bg-[#dfe6ee] shadow-[inset_0_1px_0_#ffffff] pl-1 pr-8">
            <svg class="w-7 h-[5px]" viewBox="0 0 28 5"><path d="M1 5l5-5 5 5zM15 0h10l-5 5z" fill="#5f89b3"/><path d="M1 4.500L6 0M15 .5h10" stroke="#000"/></svg>
            <svg class="w-[19px] h-[3px] mx-auto" viewBox="0 0 19 3"><path d="M0 1h19" stroke="#5f89b3" stroke-width="2" stroke-dasharray="2 2"/></svg>
        </div>

        <div class="pt-[7px] px-[15px]">
            <h3 class="font-bold leading-4">Search Result</h3>
            <div class="mt-[3px] h-[26px] flex items-center bg-[#cbdae9]">
                <div class="flex" data-toolbar="result"></div>
                <div class="h-6 flex items-center bg-[#f2f4f8] pl-[3px]">
                    <label for="search" class="w-[42px]">Search</label>
                    <input id="search" class="w-[224px] h-5 px-px border border-[#999999] bg-white outline-none">
                    <button class="w-[22px] h-6 bg-[#f2deab] text-[#6f8aa0] border border-r-2 border-b-2 border-[#6b6b66] shadow-[inset_1px_1px_0_#fffcd0]">Go</button>
                </div>
            </div>
            <div class="flex border border-[#5f89b3] relative">
                <div class="flex-1 min-w-0">
                    <table class="w-full table-fixed border-separate border-spacing-0 leading-[15px]">
                        <thead>
                            <tr class="text-left">
                                <th class="h-[22px] p-0 pl-[2px] font-normal bg-[#f2deab] border-b border-r border-[#5f89b3] shadow-[inset_1px_1px_0_#ffffff]">Name of External Message <svg class="inline-block w-2 h-2 ml-1" viewBox="0 0 8 8"><path d="M.5 7.500h7L4 .5z" fill="#d8d8d0" stroke="#b0a890"/></svg></th>
                                <th class="p-0 pl-[2px] font-normal bg-[#f2deab] border-b border-r border-[#5f89b3] shadow-[inset_1px_1px_0_#ffffff]">Namespace of External Message</th>
                                <th class="p-0 pl-[2px] font-normal bg-[#f2deab] border-b border-r border-[#5f89b3] shadow-[inset_1px_1px_0_#ffffff]">Name</th>
                                <th class="p-0 pl-[2px] font-normal bg-[#f2deab] border-b border-r border-[#5f89b3] shadow-[inset_1px_1px_0_#ffffff]">Namespace</th>
                            </tr>
                        </thead>
                        <tbody id="resultRows"></tbody>
                    </table>
                </div>
                <div class="w-[19px] shrink-0 flex flex-col items-center gap-[3px] pt-[24px] pb-[2px]">
                    <button aria-label="Scroll up" class="w-[15px] h-[15px] flex items-center justify-center border border-[#1f5b92] bg-white"><svg class="w-[9px] h-[5px]" viewBox="0 0 9 5"><path d="M1 5h7L4.500 0z" fill="#2a2a4a"/></svg></button>
                    <button aria-label="Scroll down" class="w-[15px] h-[15px] flex items-center justify-center border border-[#1f5b92] bg-white"><svg class="w-[9px] h-[5px]" viewBox="0 0 9 5"><path d="M1 0h7L4.500 5z" fill="#2a2a4a"/></svg></button>
                    <div class="w-[15px] flex-1 flex flex-col justify-end border border-[#1f5b92] bg-white shadow-[inset_-1px_1px_0_#9aa4ae]">
                        <div class="h-[30px] bg-[#94afc1] border-t border-[#1f5b92]"></div>
                    </div>
                    <button aria-label="Page up" class="w-[15px] h-[15px] flex items-center justify-center border border-[#1f5b92] bg-white"><svg class="w-[9px] h-[5px]" viewBox="0 0 9 5"><path d="M1 5h7L4.500 0z" fill="#2a2a4a"/></svg></button>
                    <button aria-label="Page down" class="w-[15px] h-[15px] flex items-center justify-center border border-[#1f5b92] bg-white"><svg class="w-[9px] h-[5px]" viewBox="0 0 9 5"><path d="M1 0h7L4.500 5z" fill="#2a2a4a"/></svg></button>
                </div>
                <!-- Highlight marks -->
                <div class="absolute left-[-11px] top-[16px] w-[240px] h-6 border-4 border-[#ff2010] rounded-md pointer-events-none"></div>
                <div class="absolute left-[442px] top-[13px] w-[140px] h-6 border-4 border-[#ff2010] rounded-md pointer-events-none"></div>
                <div class="absolute left-[-4px] top-[176px] w-[231px] h-[42px] border-4 border-[#ff2010] rounded-md pointer-events-none"></div>
                <div class="absolute left-[442px] top-[176px] w-[115px] h-[42px] border-4 border-[#ff2010] rounded-md pointer-events-none"></div>
            </div>
        </div>

        <div class="mt-[11px] h-7 flex items-center gap-3 pl-px mr-px border border-[#a9a9a9] shadow-[inset_0_1px_0_#ffffff]">
            <button class="w-[53px] h-6 font-bold bg-[#f2deab] border-2 border-black shadow-[inset_1px_1px_0_#8a8a80,inset_-2px_-2px_0_#6b6b66,inset_2px_2px_0_#fffcd0]">Apply</button>
            <button class="w-[61px] h-6 bg-[#f2deab] border border-r-2 border-b-2 border-[#6b6b66] shadow-[inset_1px_1px_0_#fffcd0]">Cancel</button>
        </div>
    </div>

    <script>
        // icon id, tooltip; '|' is a separator, '>' pushes the rest to the right
        const toolbars = {
            main: [['new', 'Create'], ['open', 'Open'], ['copy', 'Copy'], ['trash', 'Delete'], '|', ['saveall', 'Save all'], ['form', 'Close all'], '|', ['where', 'Where-used list'], ['help', 'Help'], '|', ['back', 'Back'], ['fwd', 'Forward'], ['window', 'Navigation area', 'on'], '|', ['user', 'User settings']],
            tree: [['refresh', 'Refresh', 'menu'], '|', ['filter', 'Filter', 'menu'], '|', ['find', 'Find'], '|', ['expand', 'Expand'], ['collapse', 'Collapse'], ['ddown', 'Next'], ['dup', 'Previous'], '|', ['stack', 'Sort'], '|', ['swap', 'Synchronize'], '>', ['square', 'Stop']],
            editor: [['wand', 'Display/Change', 'on'], ['save', 'Save'], ['refresh', 'Refresh'], ['copy', 'Copy'], '|', ['info', 'Info'], ['book', 'Documentation'], ['where', 'Where-used list'], ['edit', 'Properties'], '|', ['hat', 'Header', 'on'], ['pages', 'Compare'], ['scroll', 'History'], '|', ['nodes', 'Model']],
            pane: [['pin', 'Detach'], ['close', 'Close']],
            ops: [['addrow', 'Insert'], ['delrow', 'Remove'], '|', ['tri-up', 'Up'], ['tri-down', 'Down'], '|', ['copy', 'Copy'], '|', ['compare', 'Compare']],
            messages: [['addrow-off', 'Insert'], ['delrow', 'Remove'], '|', ['tri-up', 'Up'], ['tri-down', 'Down'], '|', ['cut', 'Cut'], ['copy2', 'Copy'], ['paste', 'Paste'], '|'],
            result: [['refresh', 'Refresh'], '|']
        };

        function toolbarItem(item) {
            if (item === '|') return '<span class="w-[11px] h-[22px] shrink-0 flex items-center justify-center"><span class="w-px h-3 bg-[#8a9199]"></span></span>';
            if (item === '>') return '<span class="flex-1"></span>';
            const [icon, title, kind] = item;
            if (kind === 'menu') {
                return `<button title="${title}" class="w-[30px] h-[22px] shrink-0 flex items-center bg-[#f2deab] border border-r-2 border-b-2 border-[#6b6b66] shadow-[inset_1px_1px_0_#fffcd0]"><svg class="size-4 ml-px"><use href="#i-${icon}"/></svg><svg class="w-[9px] h-4" viewBox="0 0 9 16"><path d="M2.500 2v12" stroke="#333"/><path d="M4 7h5L6.500 10z" fill="#000"/></svg></button>`;
            }
            const look = kind === 'on'
                ? 'border border-[#6f98c0] shadow-[inset_-2px_-2px_0_#fffcd0]'
                : 'border border-r-2 border-b-2 border-[#6b6b66] shadow-[inset_1px_1px_0_#fffcd0]';
            return `<button title="${title}" class="size-[22px] shrink-0 flex items-center justify-center bg-[#f2deab] ${look}"><svg class="size-4"><use href="#i-${icon}"/></svg></button>`;
        }

        document.querySelectorAll('[data-toolbar]').forEach(el => {
            el.innerHTML = toolbars[el.dataset.toolbar].map(toolbarItem).join('');
        });

        // level, state (+ closed, - open, '' leaf), icon, text
        const nodes = [
            [2, '+', 'ns', 'URN:ERP:SDI23'], [2, '+', 'ns', 'URN:ERP:TEST'], [2, '+', 'ns', 'URN:ERP:TOKEN'], [2, '+', 'ns', 'URN:ERP_020'],
            [2, '+', 'ns', 'urn:JALA.com:ECC:PP:CaffeinatedProducts'], [2, '+', 'ns', 'usn:test02:erp'], [2, '+', 'ns', 'usn:test:erp'], [2, '+', '', 'Imported Objects'],
            [0, '+', 'box', 'SC_GDZC of huasheng'], [0, '+', 'box', 'SC_JQE of jqe'], [0, '+', 'box', 'SC_MDM of jala'], [0, '+', 'box', 'SC_PUBPI of jala'],
            [0, '+', 'box', 'SC_QSS of huasheng'], [0, '+', 'box', 'SC_QYS of jala'], [0, '+', 'box', 'SC_SRM of jala'], [0, '+', 'box', 'SC_SWXT of jala'],
            [0, '+', 'box', 'SC_TEST of jala'], [0, '+', 'box', 'SC_WMS of huasheng'], [0, '+', 'box', 'SC_XMMM of jala'], [0, '+', 'box', 'SC_YCWL of jala'],
            [0, '-', 'box', 'SC_YPH of jala'], [1, '-', 'boxver', 'SC_YPH, 001 of jala'],
            [2, '+', 'ns', 'URN:YPH:FI018'], [2, '+', 'ns', 'URN:YPH:MM003'], [2, '+', 'ns', 'URN:YPH:MM004'], [2, '+', 'ns', 'URN:YPH:MM036'],
            [2, '+', 'ns', 'URN:YPH:MM063'], [2, '+', 'ns', 'URN:YPH:MM066'], [2, '+', 'ns', 'URN:YPH:SD005'], [2, '+', 'ns', 'URN:YPH:SD021'], [2, '-', 'ns', 'URN:YPH:SD038'],
            [3, '+', 'svc', 'Service Interfaces'], [3, '-', 'ext', 'External Definitions'], [4, '', '', 'ED_YPH_SD038'],
            [2, '-', 'ns', 'URN:YPH:SD061'], [3, '-', 'svc', 'Service Interfaces'], [4, '', '', 'SI_IA_YPH_SD061'],
            [3, '-', 'ext', 'External Definitions'], [4, '', '', 'ED_YPH_SD061'], [2, '+', '', 'Imported Objects'],
            [0, '+', 'box', 'SC_ZDLS of bingkun'], [0, '+', 'box', 'SC_ZJCL of jala']
        ];
        const indent = ['pl-[3px]', 'pl-[23px]', 'pl-[43px]', 'pl-[63px]', 'pl-[99px]'];
        const levelBg = ['bg-[#cbdae9]', 'bg-[#cbdae9]', 'bg-[#d7dee8]', 'bg-[#e4e8ef]', 'bg-[#f2f4f8]'];

        document.getElementById('tree').innerHTML = nodes.map(([level, state, icon, text], i) => {
            const next = nodes[i + 1];
            const line = next && next[0] !== level ? 'shadow-[inset_0_-1px_0_#bdd2e6]' : '';
            const height = icon ? 'h-[21px] pb-[2px]' : 'h-[18px]';
            const arrow = state === '+' ? '<path d="M4 1v8l4-4z" fill="#2a2a4a"/>' : '<path d="M2 3h8L6 7z" fill="#2a2a4a"/>';
            const selected = text === 'SI_IA_YPH_SD061';
            return `<div class="relative flex items-center whitespace-nowrap ${height} ${indent[level]} ${levelBg[level]} ${line}">
                ${state ? `<svg class="w-3 h-[10px] mr-[4px] shrink-0" viewBox="0 0 12 10">${arrow}</svg>` : ''}
                ${icon ? `<svg class="size-4 mr-[5px] shrink-0"><use href="#i-${icon}"/></svg>` : ''}
                <span class="${selected ? 'bg-[#ffcc33] pr-1' : ''}">${text}</span>
                ${selected ? '<span class="absolute z-10 left-[75px] -top-[5px] w-[164px] h-[26px] border-4 border-[#ff2010] rounded-md pointer-events-none"></span>' : ''}
            </div>`;
        }).join('');

        const ws = 'http://webService.assemble.biz.integration.third.jala.dtyunxi.com';
        const results = [
            ['getSapAgentReceiverRequest', ws, 'SD061'], ['getSapAgentReqDtoRequest', ws, 'SD038'], ['getSapAgentReqDtoRequest', 'http://webservice.yulj.com', 'SD005'],
            ['getSapMateriaDocumentRequest', ws, 'MM063'], ['getSapMateriaDocumentResponse', ws, 'MM063'], ['getSapMateriaRequest', ws, 'MM036'],
            ['getSapPurchasingOrderRequest', ws, 'MM003'], ['getSapPurchasingOrderResponse', ws, 'MM003'], ['getSapReconciliationRequest', ws, 'MM066'],
            ['getSapReconciliationResponse', ws, 'MM066'], ['initBySapAgentReceiverReturnRequest', ws, 'SD061'], ['initBySapAgentReceiverReturnResponse', ws, 'SD061'],
            ['initBySapAgentReturnRequest', ws, 'SD038'], ['initBySapAgentReturnResponse', ws, 'SD038'], ['initBySapMaterialReturnRequest', ws, 'MM036'], ['initBySapMaterialReturnResponse', ws, 'MM036']
        ];
        document.getElementById('resultRows').innerHTML = results.map(([name, ns, id], i) => {
            const bg = i === 0 ? 'bg-[#ffcc33]' : i % 2 ? 'bg-[#e4e8ef]' : 'bg-[#d9e5f2]';
            return `<tr class="${bg}">` + [name, ns, 'ED_YPH_' + id, 'URN:YPH:' + id].map(v =>
                `<td class="h-4 p-0 pl-px border-b border-r border-[#a9adb2] truncate">${v}</td>`).join('') + '</tr>';
        }).join('');
    </script>
</body>
</html>
